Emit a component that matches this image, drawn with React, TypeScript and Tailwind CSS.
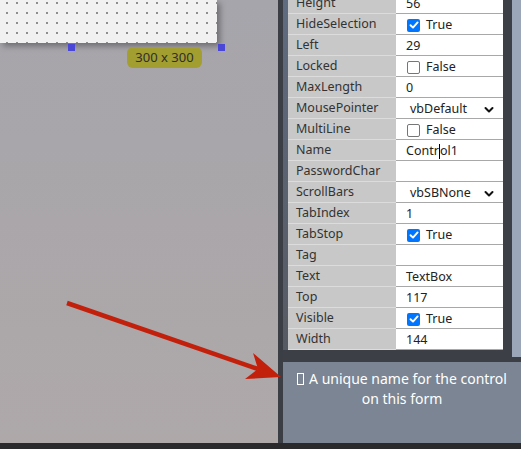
import React from 'react';

type Row = {
  label: string;
  kind: 'text' | 'check' | 'select' | 'cursor';
  value?: string;
  checked?: boolean;
};

const rows: Row[] = [
  { label: 'Height', kind: 'text', value: '56' },
  { label: 'HideSelection', kind: 'check', checked: true },
  { label: 'Left', kind: 'text', value: '29' },
  { label: 'Locked', kind: 'check', checked: false },
  { label: 'MaxLength', kind: 'text', value: '0' },
  { label: 'MousePointer', kind: 'select', value: 'vbDefault' },
  { label: 'MultiLine', kind: 'check', checked: false },
  { label: 'Name', kind: 'cursor', value: 'Control1' },
  { label: 'PasswordChar', kind: 'text', value: '' },
  { label: 'ScrollBars', kind: 'select', value: 'vbSBNone' },
  { label: 'TabIndex', kind: 'text', value: '1' },
  { label: 'TabStop', kind: 'check', checked: true },
  { label: 'Tag', kind: 'text', value: '' },
  { label: 'Text', kind: 'text', value: 'TextBox' },
  { label: 'Top', kind: 'text', value: '117' },
  { label: 'Visible', kind: 'check', checked: true },
  { label: 'Width', kind: 'text', value: '144' },
];

function CheckBox({ checked }: { checked?: boolean }) {
  if (checked) {
    return (
      <span className="w-[13px] h-[13px] rounded-[2px] bg-[#0075ff] flex items-center justify-center">
        <svg width="10" height="10" viewBox="0 0 10 10">
          <polyline points="1.5,5.2 4,7.6 8.6,2.4" fill="none" stroke="#fff" strokeWidth="1.9" strokeLinecap="round" strokeLinejoin="round" />
        </svg>
      </span>
    );
  }
  return <span className="w-[13px] h-[13px] rounded-[2px] bg-white border border-[#767676]" />;
}

function ValueCell({ row }: { row: Row }) {
  if (row.kind === 'check') {
    return (
      <div className="flex items-center gap-[6px] pl-[11px] pt-[2px]">
        <CheckBox checked={row.checked} />
        <span>{row.checked ? 'True' : 'False'}</span>
      </div>
    );
  }
  if (row.kind === 'select') {
    return (
      <div className="flex items-center justify-between pl-[14px] pr-[9px] pt-[3px]">
        <span>{row.value}</span>
        <svg width="10" height="8" viewBox="0 0 10 8">
          <polyline points="1.5,2 5,5.5 8.5,2" fill="none" stroke="#111" strokeWidth="2" strokeLinecap="round" strokeLinejoin="round" />
        </svg>
      </div>
    );
  }
  if (row.kind === 'cursor') {
    return (
      <div className="flex items-center pl-[10px] pt-[2px]">
        <span>Contr</span>
        <span className="inline-block w-px h-[15px] bg-black" />
        <span>ol1</span>
      </div>
    );
  }
  return <div className="pl-[10px] pt-[2px]">{row.value}</div>;
}

export default function App() {
  return (
    <div
      className="relative w-[521px] h-[449px] overflow-hidden flex flex-col text-[#222]"
      style={{ fontFamily: '"Noto Sans", "Open Sans", sans-serif' }}
    >
      <div className="flex flex-1">
        {/* Designer canvas */}
        <div className="relative w-[278px] bg-gradient-to-b from-[#a6a5ab] to-[#aea8a9]">
          <div className="absolute left-0 top-0 w-[217px] h-[43px] bg-[#f1f1f1] bg-[radial-gradient(circle,#8c8c8c_0.7px,transparent_1.2px)] bg-[length:10px_10px] bg-[position:2px_-2px] shadow-[3px_3px_6px_rgba(0,0,0,0.35)]" />
          <div className="absolute left-[68px] top-[44px] w-[7px] h-[7px] bg-[#4b47d6]" />
          <div className="absolute left-[218px] top-[44px] w-[7px] h-[7px] bg-[#4b47d6]" />
          <div className="absolute left-[127px] top-[47px] w-[75px] h-[21px] rounded-[6px] bg-[#a29e30] text-[13px] text-[#2e2e2e] flex items-center justify-center">
            300 x 300
          </div>
        </div>

        <div className="w-[5px] bg-[#3b3e45]" />

        {/* Property panel */}
        <div className="flex-1 flex flex-col bg-[#3c3f46]">
          <div className="h-[362px] flex">
            <div className="w-[5px] mb-[12px] bg-gradient-to-b from-[#5f6b80] to-[#565a62]" />
            <div className="w-[215px] h-[350px] overflow-hidden bg-white">
              <div className="-mt-[7px] text-[12.5px]">
                {rows.map((row) => (
                  <div key={row.label} className="flex h-[21px]">
                    <div className="w-[108px] bg-[#c8c8c8] border-b border-[#dcdcdc] pl-[8px] flex items-center pt-[1px] text-[#333]">
                      {row.label}
                    </div>
                    <div className="flex-1 border-b border-[#a8a8a8] flex flex-col justify-center">
                      <ValueCell row={row} />
                    </div>
                  </div>
                ))}
              </div>
            </div>
            <div className="w-[9px]" />
            <div className="flex-1 mb-[5px] bg-[#9ba7b8]" />
          </div>

          <div className="flex-1 bg-[#7b8593] text-white text-[14px] leading-[20px] text-center px-[10px] pt-[7px]">
            <span className="inline-block w-[7px] h-[12px] border border-white align-[-1px] mr-[5px]" />
            A unique name for the control on this form
          </div>
        </div>
      </div>

      <div className="h-[6px] bg-[#2a2a2c]" />

      {/* Annotation arrow */}
      <svg className="absolute left-0 top-0 pointer-events-none" width="521" height="449" viewBox="0 0 521 449">
        <line x1="67" y1="303" x2="258" y2="369" stroke="#c3200c" strokeWidth="4.5" />
        <polygon points="281,377 253,353 258,369 245,379" fill="#c3200c" />
      </svg>
    </div>
  );
}
